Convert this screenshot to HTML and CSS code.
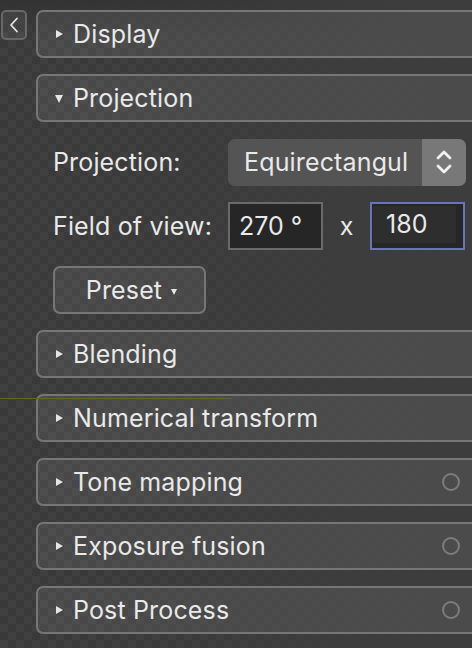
FILE: index.html
```html
<!DOCTYPE html>
<html lang="en">
<head>
<meta charset="utf-8">
<title>Panorama settings</title>
<link rel="stylesheet" href="styles.css">
</head>
<body>
<div class="sidebar">
  <div class="guide-line"></div>
  <button class="back-btn" aria-label="Back">
    <svg width="10" height="16" viewBox="0 0 10 16"><path d="M8 1.5 L2 8 L8 14.5" fill="none" stroke="#e6e6e6" stroke-width="1.8" stroke-linecap="round" stroke-linejoin="round"/></svg>
  </button>

  <div class="panel"><span class="tri tri-right"></span><span class="panel-title">Display</span></div>

  <div class="panel"><span class="tri tri-down"></span><span class="panel-title">Projection</span></div>

  <div class="field-row">
    <span class="field-label">Projection:</span>
    <div class="select">
      <span class="select-value">Equirectangul</span>
      <span class="stepper">
        <svg width="18" height="26" viewBox="0 0 18 26"><path d="M3 9 L9 3 L15 9 M3 17 L9 23 L15 17" fill="none" stroke="#f2f2f2" stroke-width="2.8" stroke-linecap="round" stroke-linejoin="round"/></svg>
      </span>
    </div>
  </div>

  <div class="field-row">
    <span class="field-label">Field of view:</span>
    <div class="num-input">270 °</div>
    <span class="times">x</span>
    <div class="num-input focused"><span class="num-inner">180</span></div>
  </div>

  <div class="button-row">
    <button class="preset-btn">Preset <span class="tri-small"></span></button>
  </div>

  <div class="panel"><span class="tri tri-right"></span><span class="panel-title">Blending</span></div>
  <div class="panel"><span class="tri tri-right"></span><span class="panel-title">Numerical transform</span></div>
  <div class="panel"><span class="tri tri-right"></span><span class="panel-title">Tone mapping</span><span class="toggle"></span></div>
  <div class="panel"><span class="tri tri-right"></span><span class="panel-title">Exposure fusion</span><span class="toggle"></span></div>
  <div class="panel"><span class="tri tri-right"></span><span class="panel-title">Post Process</span><span class="toggle"></span></div>
</div>
</body>
</html>
```

FILE: styles.css
```css
html, body {
  margin: 0;
  height: 100%;
}

body {
  overflow: hidden;
  font-family: Inter, "Noto Sans", "Liberation Sans", sans-serif;
  color: #e9e9e9;
  background-color: #3d3d3d;
  background-image:
    linear-gradient(to right, rgba(61,61,61,0) 0%, rgba(61,61,61,0.4) 45%, rgba(61,61,61,0.88) 75%, #3d3d3d 100%),
    linear-gradient(to bottom, #323232 0px, rgba(50,50,50,0) 40px),
    repeating-conic-gradient(#393939 0 25%, #404040 0 50%);
  background-size: 100% 100%, 100% 100%, 16px 16px;
}

.sidebar {
  position: relative;
  display: grid;
  grid-template-columns: 26px 1fr;
  column-gap: 9px;
  row-gap: 16px;
  padding: 10px 0 0 1px;
  margin-right: -14px;
}

/* thin ruler line crossing the left side */
.guide-line {
  position: absolute;
  left: 0;
  top: 398px;
  width: 232px;
  height: 1px;
  background: #66632c;
  z-index: 2;
}

.back-btn {
  grid-column: 1;
  grid-row: 1;
  width: 26px;
  height: 30px;
  padding: 0;
  box-sizing: border-box;
  border: 2px solid #686868;
  border-radius: 5px;
  background: rgba(255,255,255,0.06);
  display: flex;
  align-items: center;
  justify-content: center;
}

.panel,
.field-row,
.button-row {
  grid-column: 2;
}

.panel {
  height: 48px;
  box-sizing: border-box;
  border: 2px solid #767676;
  border-radius: 7px;
  background: rgba(255,255,255,0.075);
  display: flex;
  align-items: center;
  padding-left: 17px;
}

.panel-title {
  font-size: 25px;
  line-height: 1;
  letter-spacing: 0.15px;
}

.tri {
  width: 0;
  height: 0;
  margin-right: 10px;
}

.tri-right {
  border-top: 4.5px solid transparent;
  border-bottom: 4.5px solid transparent;
  border-left: 7px solid #e6e6e6;
  margin-left: 1px;
}

.tri-down {
  border-left: 4px solid transparent;
  border-right: 4px solid transparent;
  border-top: 8px solid #e6e6e6;
  margin-top: 2px;
  margin-right: 10px;
}

.toggle {
  margin-left: auto;
  margin-right: 24px;
  width: 18px;
  height: 18px;
  box-sizing: border-box;
  border: 2px solid #7d7d7d;
  border-radius: 50%;
}

.field-row {
  display: flex;
  align-items: center;
  padding-left: 17px;
  height: 48px;
}

.field-label {
  width: 175px;
  font-size: 25px;
  letter-spacing: 0.15px;
  flex-shrink: 0;
}

.select {
  width: 238px;
  height: 47px;
  border-radius: 7px;
  background: #545454;
  display: flex;
  overflow: hidden;
}

.select-value {
  flex: 1;
  font-size: 25px;
  letter-spacing: 0.15px;
  line-height: 47px;
  padding-left: 16px;
  white-space: nowrap;
  overflow: hidden;
}

.stepper {
  width: 44px;
  background: #787878;
  display: flex;
  align-items: center;
  justify-content: center;
}

.num-input {
  width: 95px;
  height: 48px;
  box-sizing: border-box;
  border: 2px solid #6a6a6a;
  background: #262626;
  font-size: 25px;
  line-height: 44px;
  padding-left: 9px;
}

.times {
  width: 47px;
  text-align: center;
  font-size: 25px;
}

.num-input.focused {
  border-color: #6676b8;
  padding: 2px 7px 5px 1px;
  line-height: normal;
  display: flex;
}

.num-inner {
  flex: 1;
  background: #2e2e2e;
  line-height: 37px;
  padding-left: 13px;
}

.button-row {
  padding-left: 17px;
  display: flex;
}

.preset-btn {
  width: 153px;
  height: 48px;
  box-sizing: border-box;
  border: 2px solid #767676;
  border-radius: 7px;
  background: rgba(255,255,255,0.07);
  color: #e9e9e9;
  font-family: inherit;
  font-size: 25px;
  letter-spacing: 0.15px;
  display: flex;
  align-items: center;
  justify-content: center;
  gap: 9px;
  padding: 0 0 0 4px;
}

.tri-small {
  width: 0;
  height: 0;
  border-left: 3.5px solid transparent;
  border-right: 3.5px solid transparent;
  border-top: 6px solid #e6e6e6;
  margin-top: 3px;
}
```
